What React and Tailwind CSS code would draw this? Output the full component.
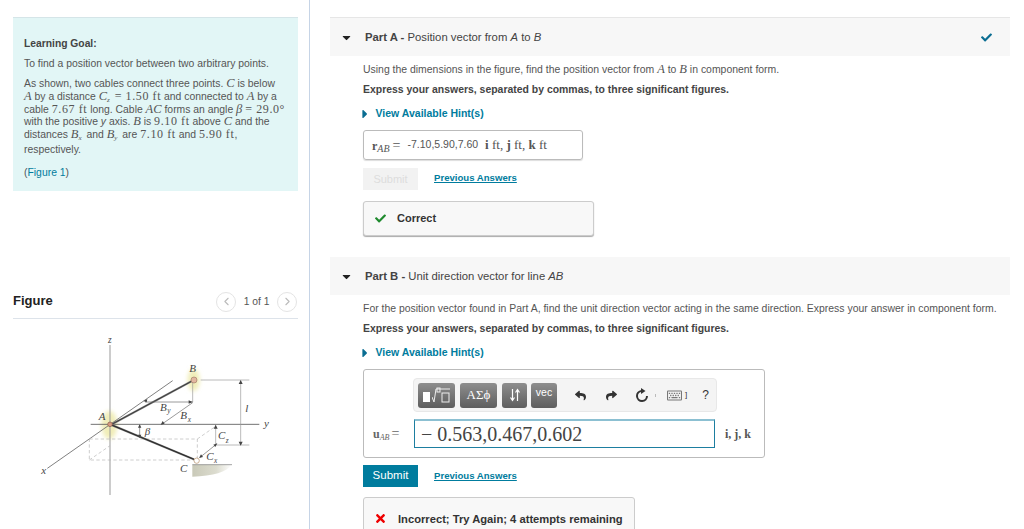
import React from "react";
import { FaCheck, FaTimes, FaCaretDown, FaCaretRight, FaReply, FaShare, FaRegKeyboard } from "react-icons/fa";
import { FiChevronLeft, FiChevronRight } from "react-icons/fi";

const M = ({ children }) => <span className="font-['Liberation_Serif',serif] text-[12px] leading-[0px] tracking-[0.6px]">{children}</span>;
const I = ({ children }) => <span className="font-['Liberation_Serif',serif] italic text-[12.5px] leading-[0px]">{children}</span>;

const Figure = () => (
  <svg viewBox="0 0 720 510" className="w-[240px] h-[170px] block">
    <defs>
      <filter id="blur"><feGaussianBlur stdDeviation="6" /></filter>
      <linearGradient id="ground" x1="0" y1="0" x2="1" y2="0">
        <stop offset="0" stopColor="#c9c9b8" />
        <stop offset="0.6" stopColor="#dcdccf" />
        <stop offset="1" stopColor="#ffffff" />
      </linearGradient>
    </defs>
    <g fill="#f0edb8" filter="url(#blur)">
      <ellipse cx="238" cy="285" rx="24" ry="42" />
      <ellipse cx="491" cy="150" rx="18" ry="34" />
    </g>
    <path d="M487 404H606C590 425 550 438 487 440Z" fill="url(#ground)" />
    <line x1="487" y1="404" x2="606" y2="404" stroke="#777" strokeWidth="2" />
    <g stroke="#666" strokeWidth="2.5" fill="none">
      <line x1="240" y1="45" x2="240" y2="495" stroke="#999" strokeWidth="3" />
      <line x1="182" y1="283" x2="688" y2="283" stroke="#555" />
      <line x1="52" y1="415" x2="428" y2="152" stroke="#666" />
    </g>
    <g stroke="#b5b5b5" strokeWidth="2" strokeDasharray="10 7" fill="none">
      <path d="M178 327H502V390H178Z" />
      <path d="M178 390L240 347M502 327L558 288" />
    </g>
    <g fill="none">
      <line x1="245" y1="283" x2="488" y2="152" stroke="#777" strokeWidth="6" />
      <line x1="245" y1="283" x2="488" y2="152" stroke="#333" strokeWidth="2.5" />
      <line x1="245" y1="285" x2="492" y2="388" stroke="#666" strokeWidth="6" />
      <line x1="245" y1="285" x2="492" y2="388" stroke="#2a2a2a" strokeWidth="3" />
    </g>
    <g stroke="#999" strokeWidth="2" fill="none">
      <line x1="488" y1="155" x2="488" y2="216" />
      <line x1="345" y1="216" x2="488" y2="216" stroke="#666" />
      <line x1="395" y1="283" x2="488" y2="218" stroke="#666" />
      <line x1="512" y1="150" x2="658" y2="150" />
      <line x1="556" y1="345" x2="658" y2="345" />
      <line x1="632" y1="152" x2="632" y2="345" />
      <line x1="557" y1="286" x2="557" y2="342" />
      <line x1="510" y1="382" x2="560" y2="342" stroke="#666" />
      <line x1="329" y1="285" x2="329" y2="322" stroke="#666" />
    </g>
    <g fill="#444">
      <path d="M632 150l-6 12h12zM632 347l-6-12h12zM557 284l-6 12h12zM329 283l-5 10h10zM329 324l-5-10h10z" />
      <path d="M488 216l-12-5v10zM340 213l12-6-2 10zM392 284l12-3-6-8zM562 340l-12 4 6 7zM507 384l12-3-6-8z" />
    </g>
    <circle cx="492" cy="150" r="9" fill="#e2b7a0" stroke="#a07a66" strokeWidth="2" />
    <circle cx="240" cy="283" r="7" fill="#d69a80" stroke="#8a5a48" strokeWidth="2" />
    <circle cx="500" cy="392" r="8" fill="#fff" stroke="#b08a60" strokeWidth="2" />
    <g fontFamily="'Liberation Serif', serif" fontStyle="italic" fontSize="33" fill="#444">
      <text x="234" y="40" fontSize="28">z</text>
      <text x="478" y="125">B</text>
      <text x="206" y="271">A</text>
      <text x="390" y="242">B</text>
      <text x="412" y="250" fontSize="22">y</text>
      <text x="451" y="268">B</text>
      <text x="473" y="275" fontSize="22">x</text>
      <text x="344" y="316">β</text>
      <text x="646" y="246">l</text>
      <text x="702" y="291">y</text>
      <text x="564" y="326">C</text>
      <text x="587" y="340" fontSize="22">z</text>
      <text x="529" y="390">C</text>
      <text x="552" y="398" fontSize="22">x</text>
      <text x="450" y="426">C</text>
      <text x="34" y="432">x</text>
    </g>
  </svg>
);

const PartHeader = ({ children }) => (
  <div className="h-[38px] bg-[#f7f7f7] flex items-center text-[#444] text-[11.3px]">
    <FaCaretDown className="ml-[10px] mr-[12px] text-[13px] text-[#222]" />
    <span>{children}</span>
  </div>
);

const Hint = () => (
  <div className="flex items-center text-[10.5px] font-bold text-[#007c9e] h-[12px]">
    <FaCaretRight className="text-[14px] mr-[3.5px] -ml-[5px] text-[#0a6d92]" />
    View Available Hint(s)
  </div>
);

const ToolBtn = ({ className, children }) => (
  <div className={`h-[25px] rounded-[3px] bg-gradient-to-b from-[#8e8e8e] to-[#5e5e5e] text-white flex items-center justify-center ${className}`}>
    {children}
  </div>
);

const Link = () => (
  <span className="text-[9.6px] font-bold text-[#007c9e] underline">Previous Answers</span>
);

export default function App() {
  return (
    <div className="flex h-[529px] w-[1024px] overflow-hidden bg-white font-['Liberation_Sans',sans-serif] text-[#555]">
      <div className="w-[310px] shrink-0 border-r border-[#c6d4e6] pl-[13px] pr-[11px] pt-[17px]">
        <div className="h-[174px] bg-[#e2f6f6] border-t border-[#d5e5e8] px-[11px] pt-[19px] text-[10.4px] leading-[13px]">
          <p className="font-bold text-[#444] text-[10.3px] leading-[13px]">Learning Goal:</p>
          <p className="mt-[7px]">To find a position vector between two arbitrary points.</p>
          <p className="mt-[8px] leading-[12.8px] whitespace-nowrap">
            As shown, two cables connect three points. <I>C</I> is below<br />
            <I>A</I> by a distance <I>C<sub className="text-[7px] mr-[2px]">z</sub></I> <M>= 1.50 ft</M> and connected to <I>A</I> by a<br />
            cable <M>7.67 ft</M> long. Cable <I>AC</I> forms an angle <I>β</I> <M>= 29.0°</M><br />
            with the positive <em>y</em> axis. <I>B</I> is <M>9.10 ft</M> above <I>C</I> and the<br />
            distances <I>B<sub className="text-[7px] mr-[2px]">x</sub></I> and <I>B<sub className="text-[7px] mr-[2px]">y</sub></I> are <M>7.10 ft</M> and <M>5.90 ft</M>,
          </p>
          <p className="mt-[2px] leading-[12.8px]">respectively.</p>
          <p className="mt-[9px]">(<span className="text-[#007c9e]">Figure 1</span>)</p>
        </div>
        <div className="mt-[99px] h-[29px] border-b border-[#dde3ea] flex items-center justify-between pb-[5px]">
          <span className="text-[13px] font-bold text-[#222] pb-[2px]">Figure</span>
          <div className="flex items-center text-[#555] text-[10.3px] mr-[1px]">
            <span className="w-[20px] h-[20px] rounded-full border border-[#e4e4e4] flex items-center justify-center text-[#bbb]"><FiChevronLeft className="text-[13px]" /></span>
            <span className="mx-[7.5px]">1 of 1</span>
            <span className="w-[20px] h-[20px] rounded-full border border-[#e4e4e4] flex items-center justify-center text-[#bbb]"><FiChevronRight className="text-[13px]" /></span>
          </div>
        </div>
        <div className="mt-[11px] ml-[17px]"><Figure /></div>
      </div>

      <div className="ml-[20px] w-[680px] shrink-0 pt-[17px] text-[10.45px]">
        <div className="border-t border-[#e6e6e6]">
          <div className="relative">
            <PartHeader><b>Part A - </b>Position vector from <em>A</em> to <em>B</em></PartHeader>
            <FaCheck className="absolute right-[18px] top-[14px] text-[11px] text-[#0a6d92]" />
          </div>
        </div>
        <div className="pl-[33px]">
          <p className="mt-[7px] h-[14px] leading-[14px]">Using the dimensions in the figure, find the position vector from <I>A</I> to <I>B</I> in component form.</p>
          <p className="mt-[6px] h-[13px] leading-[13px] font-bold text-[#444]">Express your answers, separated by commas, to three significant figures.</p>
          <div className="mt-[12px]"><Hint /></div>
          <div className="mt-[10px] w-[220px] h-[30px] border border-[#bbb] rounded-[3px] flex items-center pl-[8px] text-[#555] shadow-[0_1px_1px_#ddd] whitespace-nowrap">
            <span className="font-['Liberation_Serif',serif] text-[12px]"><b>r</b><sub className="text-[10px] italic">AB</sub><span className="text-[14px] ml-[3px]">=</span></span>
            <span className="ml-[7px] text-[10.5px]">-7.10,5.90,7.60</span>
            <span className="ml-[7px] font-['Liberation_Serif',serif] text-[13px]"><b>i</b> ft, <b>j</b> ft, <b>k</b> ft</span>
          </div>
          <div className="mt-[8px] flex items-center">
            <div className="w-[55px] h-[22px] bg-[#f2f2f2] text-[#ddd] text-[11px] flex items-center justify-center">Submit</div>
            <span className="ml-[16px] -mt-[2px]"><Link /></span>
          </div>
          <div className="mt-[11px] w-[231px] h-[35px] rounded-[3px] border border-[#ccc] bg-[#f8f8f8] shadow-[0_1px_1px_#aaa] flex items-center pl-[11px] font-bold text-[11px] text-[#333]">
            <FaCheck className="text-[11px] text-[#1f8a2e] mr-[11px]" />
            Correct
          </div>
        </div>

        <div className="mt-[21px]">
          <PartHeader><b>Part B - </b>Unit direction vector for line <em>AB</em></PartHeader>
        </div>
        <div className="pl-[33px]">
          <p className="mt-[7px] h-[14px] leading-[14px] whitespace-nowrap">For the position vector found in Part A, find the unit direction vector acting in the same direction. Express your answer in component form.</p>
          <p className="mt-[6px] h-[13px] leading-[13px] font-bold text-[#444]">Express your answers, separated by commas, to three significant figures.</p>
          <div className="mt-[12px]"><Hint /></div>
          <div className="mt-[10px] w-[402px] h-[89px] border border-[#bbb] rounded-[3px] pt-[8px]">
            <div className="ml-[49px] w-[304px] h-[34px] rounded-[4px] bg-[#f4f4f4] border border-[#e8e8e8] flex items-center pl-[4px] text-[#333]">
              <ToolBtn className="w-[37px]">
                <span className="w-[7px] h-[10px] bg-white mr-[2px] mt-[3px]" />
                <svg width="19" height="17" viewBox="0 0 19 17" fill="none" stroke="#eee" strokeWidth="1"><path d="M0 10l2 5 2-13h14" /><rect x="5" y="1" width="3" height="4" /><rect x="10" y="6" width="7" height="9" /></svg>
              </ToolBtn>
              <ToolBtn className="w-[37px] ml-[5px] text-[13px] font-['Liberation_Serif',serif]">ΑΣϕ</ToolBtn>
              <ToolBtn className="w-[25px] ml-[5px]">
                <svg width="10" height="14" viewBox="0 0 10 14" fill="none" stroke="#fff" strokeWidth="1.2"><path d="M2.5 1v11M0.5 9.5l2 3 2-3M7.5 13V2M5.5 4.5l2-3 2 3" /></svg>
              </ToolBtn>
              <ToolBtn className="w-[26px] ml-[4px] text-[10.5px] pb-[4px]">vec</ToolBtn>
              <FaReply className="ml-[18px] text-[11px]" />
              <FaShare className="ml-[20px] text-[11px]" />
              <svg width="14" height="14" viewBox="0 0 14 14" className="ml-[18px]" fill="none">
                <path d="M6.5 3A5 5 0 1 0 12 8" stroke="#333" strokeWidth="2" />
                <path d="M6 0L10.5 3L6 6Z" fill="#333" />
              </svg>
              <span className="ml-[6px] w-[1px] h-[3px] bg-[#bbb]" />
              <FaRegKeyboard className="ml-[11px] text-[15px] text-[#777]" />
              <span className="ml-[3px] text-[8px]">]</span>
              <span className="ml-[15px] text-[12px]">?</span>
            </div>
            <div className="mt-[7px] flex items-center">
              <span className="ml-[9px] w-[41px] text-[#666] text-[12px] font-['Liberation_Serif',serif] whitespace-nowrap"><b>u</b><sub className="text-[8px] italic">AB</sub><span className="text-[14px] ml-[2px]">=</span></span>
              <div className="w-[301px] h-[29px] border border-[#1d7ea0] border-t-2 border-t-[#8cc0d2] flex items-center pl-[6px] font-['Liberation_Serif',serif] text-[20px] text-[#444]">
                − 0.563,0.467,0.602
              </div>
              <span className="ml-[10px] font-['Liberation_Serif',serif] text-[12px] font-bold">i, j, k</span>
            </div>
          </div>
          <div className="mt-[7px] flex items-center">
            <div className="w-[55px] h-[22px] bg-[#007c9e] text-white text-[11.5px] flex items-center justify-center">Submit</div>
            <span className="ml-[16px]"><Link /></span>
          </div>
          <div className="mt-[10px] w-[272px] h-[50px] rounded-[3px] border border-[#ccc] bg-[#f8f8f8] flex items-start pt-[13px] pl-[10px] font-bold text-[11.2px] text-[#333]">
            <FaTimes className="text-[13px] text-[#e00] mr-[11px] mt-[1px]" />
            Incorrect; Try Again; 4 attempts remaining
          </div>
        </div>
      </div>
    </div>
  );
}
